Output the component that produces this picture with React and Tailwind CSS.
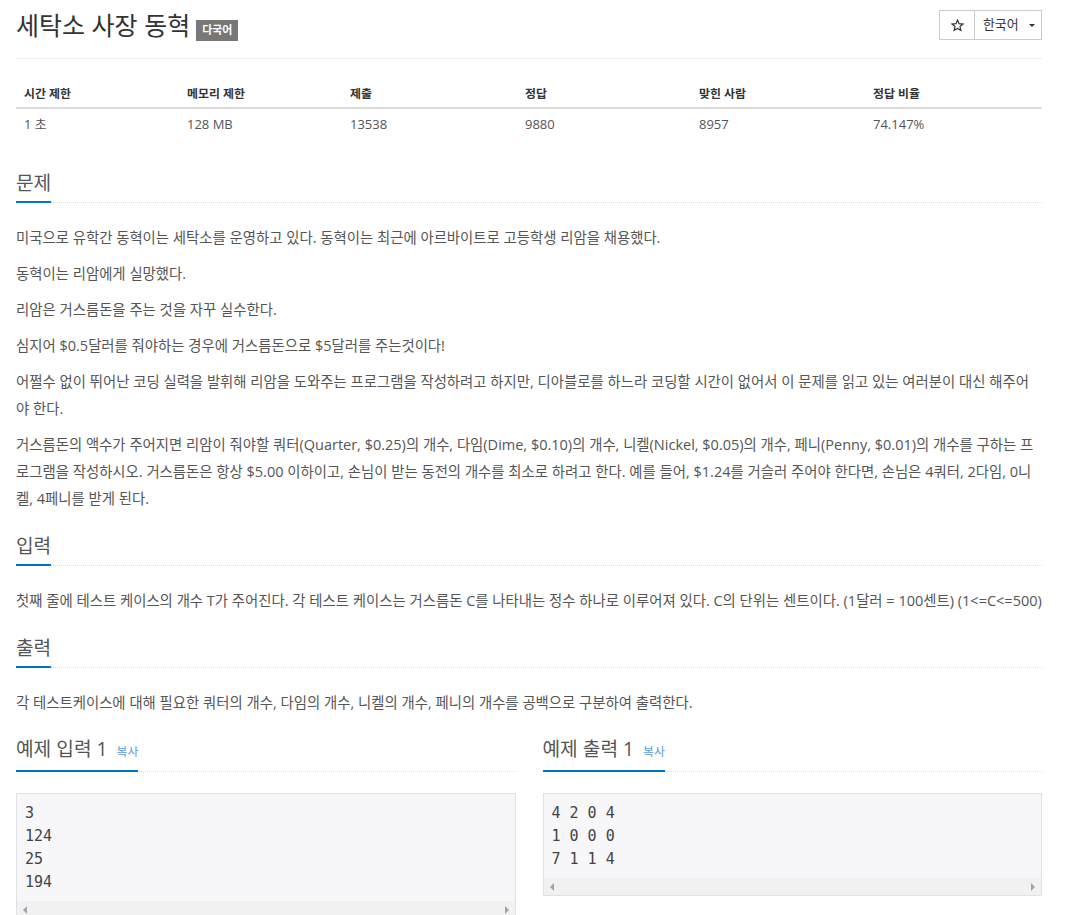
import React from "react";

const HANGUL = /([\uAC00-\uD7A3]+)/;

// Hangul runs get their own size so widths sit close to the original page
function Ko({ children }) {
  return String(children)
    .split(HANGUL)
    .map((part, i) =>
      i % 2 ? (
        <span key={i} className="text-[0.993em]">
          {part}
        </span>
      ) : (
        part
      )
    );
}

function Para({ lines }) {
  return (
    <p className="mb-[9px] whitespace-nowrap leading-[27px]">
      {lines.map((l, i) => (
        <React.Fragment key={i}>
          {i > 0 && <br />}
          <Ko>{l}</Ko>
        </React.Fragment>
      ))}
    </p>
  );
}

function Headline({ children, extra }) {
  return (
    <div className="mb-[21px] border-b border-dotted border-[#ddd]">
      <h2 className="-mb-px inline-block border-b-2 border-[#0076c0] pb-[3px] text-[19.3px] leading-[30px] text-[#555]">
        <Ko>{children}</Ko>
        {extra && (
          <span className="ml-[9px] text-[12px] text-[#5a9bd5]">
            <Ko>{extra}</Ko>
          </span>
        )}
      </h2>
    </div>
  );
}

function Sample({ title, text }) {
  return (
    <div>
      <Headline extra="복사">{title}</Headline>
      <div className="border border-[#e1e1e8] bg-[#f7f7f9]">
        <pre className="px-[8px] pb-[7px] pt-[8px] font-['DejaVu_Sans_Mono',monospace] text-[15px] leading-[23px] text-[#444]">
          {text}
        </pre>
        <div className="flex h-[17px] items-center justify-between bg-[#f1f1f1] px-[6px]">
          <span className="h-0 w-0 border-y-[4px] border-r-[4px] border-y-transparent border-r-[#a3a3a3]" />
          <span className="h-0 w-0 border-y-[4px] border-l-[4px] border-y-transparent border-l-[#a3a3a3]" />
        </div>
      </div>
    </div>
  );
}

const stats = [
  ["시간 제한", "1 초"],
  ["메모리 제한", "128 MB"],
  ["제출", "13538"],
  ["정답", "9880"],
  ["맞힌 사람", "8957"],
  ["정답 비율", "74.147%"],
];

export default function App() {
  return (
    <div className="min-h-screen bg-white font-['Open_Sans','Noto_Sans_CJK_KR',sans-serif] text-[14.5px] text-[#555]">
      <div className="ml-[16px] w-[1026px]">
        {/* title bar */}
        <div className="flex h-[59px] items-start justify-between border-b border-[#eee] pt-[10px]">
          <div className="flex items-start">
            <h1 className="text-[25.2px] leading-[30px] text-[#333]">
              <Ko>세탁소 사장 동혁</Ko>
            </h1>
            <span className="ml-[6px] mt-[10px] flex h-[21px] items-center bg-[#777] px-[6px] text-[11px] font-bold text-white">
              <Ko>다국어</Ko>
            </span>
          </div>
          <div className="flex">
            <button className="flex h-[30px] w-[36px] items-center justify-center border border-[#ccc] text-[#333]">
              <svg width="13" height="13" viewBox="0 0 24 24" fill="none" stroke="#333" strokeWidth="2.2" strokeLinejoin="miter">
                <polygon points="12,2 14.9,8.6 22,9.3 16.6,14 18.2,21 12,17.3 5.8,21 7.4,14 2,9.3 9.1,8.6" />
              </svg>
            </button>
            <button className="-ml-px flex h-[30px] w-[68px] items-center border border-[#ccc] pl-[8px] text-[13px] text-[#333]">
              <Ko>한국어</Ko>
              <span className="ml-[10px] h-0 w-0 border-x-[3px] border-t-[3px] border-x-transparent border-t-[#333]" />
            </button>
          </div>
        </div>

        {/* info table */}
        <div className="mt-[17px] grid grid-cols-[163px_163px_175px_174px_174px_1fr]">
          {stats.map(([h]) => (
            <div key={h} className="flex h-[33px] items-center border-b-2 border-[#ddd] px-[8px] pt-[4px] text-[12px] font-bold text-[#333]">
              <span>
                <Ko>{h}</Ko>
              </span>
            </div>
          ))}
          {stats.map(([h, v]) => (
            <div key={h} className="flex h-[30px] items-center px-[8px] pt-[1px] text-[13px] text-[#555]">
              <span>
                <Ko>{v}</Ko>
              </span>
            </div>
          ))}
        </div>

        <section className="mb-[19px] mt-[29px]">
          <Headline>문제</Headline>
          <Para lines={["미국으로 유학간 동혁이는 세탁소를 운영하고 있다. 동혁이는 최근에 아르바이트로 고등학생 리암을 채용했다."]} />
          <Para lines={["동혁이는 리암에게 실망했다."]} />
          <Para lines={["리암은 거스름돈을 주는 것을 자꾸 실수한다."]} />
          <Para lines={["심지어 $0.5달러를 줘야하는 경우에 거스름돈으로 $5달러를 주는것이다!"]} />
          <Para
            lines={[
              "어쩔수 없이 뛰어난 코딩 실력을 발휘해 리암을 도와주는 프로그램을 작성하려고 하지만, 디아블로를 하느라 코딩할 시간이 없어서 이 문제를 읽고 있는 여러분이 대신 해주어",
              "야 한다.",
            ]}
          />
          <Para
            lines={[
              "거스름돈의 액수가 주어지면 리암이 줘야할 쿼터(Quarter, $0.25)의 개수, 다임(Dime, $0.10)의 개수, 니켈(Nickel, $0.05)의 개수, 페니(Penny, $0.01)의 개수를 구하는 프",
              "로그램을 작성하시오. 거스름돈은 항상 $5.00 이하이고, 손님이 받는 동전의 개수를 최소로 하려고 한다. 예를 들어, $1.24를 거슬러 주어야 한다면, 손님은 4쿼터, 2다임, 0니",
              "켈, 4페니를 받게 된다.",
            ]}
          />
        </section>

        <section className="mb-[19px]">
          <Headline>입력</Headline>
          <Para lines={["첫째 줄에 테스트 케이스의 개수 T가 주어진다. 각 테스트 케이스는 거스름돈 C를 나타내는 정수 하나로 이루어져 있다. C의 단위는 센트이다. (1달러 = 100센트) (1<=C<=500)"]} />
        </section>

        <section className="mb-[18px]">
          <Headline>출력</Headline>
          <Para lines={["각 테스트케이스에 대해 필요한 쿼터의 개수, 다임의 개수, 니켈의 개수, 페니의 개수를 공백으로 구분하여 출력한다."]} />
        </section>

        <div className="grid grid-cols-2 gap-x-[27px]">
          <Sample title="예제 입력 1" text={"3\n124\n25\n194"} />
          <Sample title="예제 출력 1" text={"4 2 0 4\n1 0 0 0\n7 1 1 4"} />
        </div>
      </div>
    </div>
  );
}
